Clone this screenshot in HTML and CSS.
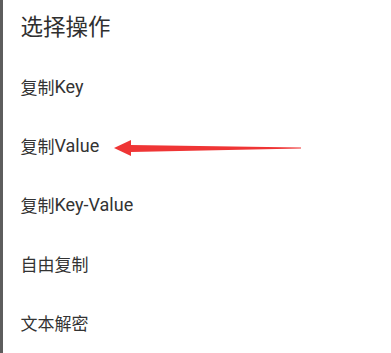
FILE: index.html
```html
<!DOCTYPE html>
<html>
<head>
<meta charset="utf-8">
<link rel="stylesheet" href="styles.css">
</head>
<body>
<div class="dialog">
  <div class="title">选择操作</div>
  <ul class="menu">
    <li class="item">复制<span class="latin">Key</span></li>
    <li class="item">复制<span class="latin">Value</span></li>
    <li class="item">复制<span class="latin">Key-Value</span></li>
    <li class="item">自由复制</li>
    <li class="item">文本解密</li>
  </ul>
  <svg class="arrow" width="200" height="24" viewBox="0 0 200 24">
    <polygon points="3,12 20,4 20,9 190,11.5 190,12.5 20,16 20,20" fill="#ef3535"/>
  </svg>
</div>
</body>
</html>
```
FILE: styles.css
```css
html, body {
  margin: 0;
  padding: 0;
  background: #ffffff;
}
.dialog {
  position: relative;
  width: 391px;
  height: 353px;
  box-sizing: border-box;
  border-left: 3px solid #5d5d5d;
  background: #ffffff;
  font-family: Roboto, "Noto Sans CJK SC", sans-serif;
  color: #333333;
  overflow: hidden;
}
.title {
  font-size: 22.5px;
  line-height: 30px;
  padding: 12px 0 14.5px 17.5px;
  color: #2f2f2f;
}
.menu {
  list-style: none;
  margin: 0;
  padding: 0;
}
.item {
  height: 59px;
  display: flex;
  align-items: center;
  padding-left: 17.5px;
  font-size: 17px;
  color: #333333;
}
.latin {
  font-size: 18px;
}
.arrow {
  position: absolute;
  left: 108px;
  top: 136px;
}
```
